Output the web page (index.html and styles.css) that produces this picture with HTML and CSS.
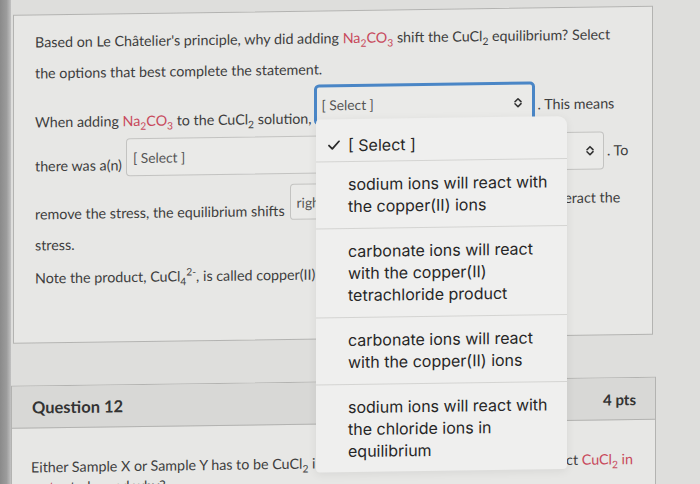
FILE: index.html
```html
<!DOCTYPE html>
<html lang="en">
<head>
<meta charset="utf-8">
<title>Question 11</title>
<link rel="stylesheet" href="styles.css">
</head>
<body>
<div class="screen">
  <div class="bezel"></div>
  <div class="viewport">
    <div class="sheet">
      <section class="card q11">
        <p class="prompt">Based on Le Châtelier's principle, why did adding <span class="chem">Na<sub>2</sub>CO<sub>3</sub></span> shift the CuCl<sub>2</sub> equilibrium? Select the options that best complete the statement.</p>

        <div class="row r1">
          <span class="lead">When adding <span class="chem">Na<sub>2</sub>CO<sub>3</sub></span> to the CuCl<sub>2</sub> solution,</span>
          <span class="select focused s1"><span class="val">[ Select ]</span><svg class="chev" viewBox="0 0 10 12"><path d="M2 5 L5 2 L8 5 M2 7 L5 10 L8 7"/></svg></span>
          <span class="tail">. This means</span>
        </div>

        <div class="row r2">
          <span class="lead">there was a(n)</span>
          <span class="select s2"><span class="val">[ Select ]</span><svg class="chev" viewBox="0 0 10 12"><path d="M2 5 L5 2 L8 5 M2 7 L5 10 L8 7"/></svg></span>
          <span class="tail">. To</span>
        </div>

        <div class="row r3">
          <span class="lead">remove the stress, the equilibrium shifts</span>
          <span class="select s3"><span class="val">right</span><svg class="chev" viewBox="0 0 10 12"><path d="M2 5 L5 2 L8 5 M2 7 L5 10 L8 7"/></svg></span>
          <span class="tail">to counteract the</span>
        </div>

        <p class="line stress">stress.</p>
        <p class="line note">Note the product, CuCl<sub>4</sub><sup>2-</sup>, is called copper(II) tetrachloride.</p>
      </section>

      <section class="card q12">
        <header class="qhead">
          <h2 class="qtitle">Question 12</h2>
          <span class="pts">4 pts</span>
        </header>
        <div class="qbody">
          <p class="qline"><span class="qa">Either Sample X or Sample Y has to be CuCl<sub>2</sub> in water. Which sample do you</span><span class="qb">expect <span class="chem">CuCl<sub>2</sub> in</span></span></p>
          <p class="qline2"><span class="chem">water</span> to be and why?</p>
        </div>
      </section>

      <div class="menu">
        <div class="opt first"><svg class="check" viewBox="0 0 12 10"><path d="M1 5.2 L4.3 8.6 L11 1"/></svg>[ Select ]</div>
        <div class="opt">sodium ions will react with<br>the copper(II) ions</div>
        <div class="opt">carbonate ions will react<br>with the copper(II)<br>tetrachloride product</div>
        <div class="opt">carbonate ions will react<br>with the copper(II) ions</div>
        <div class="opt last">sodium ions will react with<br>the chloride ions in<br>equilibrium</div>
      </div>
    </div>
  </div>
</div>
</body>
</html>
```

FILE: styles.css
```css
* { box-sizing: border-box; }

html, body {
  margin: 0;
  height: 100%;
}

body {
  background: #e0e0de;
  overflow: hidden;
  font-family: Lato, "Liberation Sans", sans-serif;
  color: #3e3e3e;
}

.screen {
  display: flex;
  width: 700px;
  height: 484px;
}

.bezel {
  flex: none;
  width: 11px;
  background: linear-gradient(90deg, #8a8a8a 0%, #9c9c9c 60%, #c2c2c2 100%);
}

.viewport {
  flex: 1;
  position: relative;
  overflow: hidden;
  background: #dededc;
}

.sheet {
  position: relative;
  height: 510px;
  padding-top: 10px;
  transform: skewY(-0.8deg);
  transform-origin: 344px 242px;
}

sub, sup {
  font-size: 0.72em;
  line-height: 0;
}

.chem { color: #c84a5c; }

/* ---------- question 11 card ---------- */
.card {
  background: #e7e7e5;
  border: 1px solid #b3b3b1;
}

.q11 {
  margin-left: 2px;
  width: 640px;
  height: 329px;
  padding: 11px 23px 0 21px;
  font-size: 14.3px;
}

.prompt {
  margin: 0;
  line-height: 31px;
}

.row {
  display: flex;
  align-items: flex-start;
  white-space: nowrap;
}

.lead, .tail {
  line-height: 20px;
}

.lead { margin-right: 2px; }
.tail { margin-left: 3px; }

.select {
  flex: none;
  display: flex;
  align-items: center;
  justify-content: space-between;
  background: #eaeae8;
  border: 1px solid #c3c3c1;
  border-radius: 4px;
  padding: 0 8px 0 6px;
  color: #555;
  font-size: 13.8px;
}

.select.focused {
  border: 3px solid #4a86c6;
  border-radius: 5px;
  padding: 0 9px 0 5px;
}

.chev {
  width: 10px;
  height: 12px;
  fill: none;
  stroke: #333;
  stroke-width: 1.6;
  stroke-linecap: round;
  stroke-linejoin: round;
}

.r1 .s1 { width: 221px; height: 41px; }
.r1 .lead { margin-top: 24px; }
.r1 .tail { margin-top: 13px; }

.r2 { margin-top: 7px; }
.r2 .s2 { width: 478px; height: 38px; }
.r2 .lead { margin-top: 17px; margin-right: 4px; }
.r2 .tail { margin-top: 9px; }

.r3 { margin-top: 10px; }
.r3 .s3 { width: 216px; height: 36px; }
.r3 .lead { margin-top: 17px; margin-right: 5px; }
.r3 .tail { margin-top: 8px; margin-left: 6px; }

.line {
  margin: 0;
  line-height: 20px;
}

.stress { margin-top: 11px; }
.note { margin-top: 13px; }

/* ---------- question 12 card ---------- */
.q12 {
  margin-top: 42px;
  width: 645px;
  height: 140px;
}

.qhead {
  display: flex;
  align-items: center;
  justify-content: space-between;
  height: 42px;
  padding: 0 19px 0 20px;
  background: #d8d8d6;
  border-bottom: 1px solid #b3b3b1;
}

.qtitle {
  margin: 0;
  font-size: 16.5px;
  font-weight: 700;
  color: #333;
}

.pts {
  font-size: 15px;
  font-weight: 700;
  color: #333;
}

.qbody {
  padding: 29px 22px 0 19px;
  font-size: 14.3px;
  line-height: 20px;
}

.qline {
  margin: 0;
  display: flex;
  justify-content: space-between;
  white-space: nowrap;
}

.qa {
  flex: 1 1 auto;
  min-width: 0;
  overflow: hidden;
  margin-right: 4px;
}

.qb { flex: none; }

.qline2 { margin: 0; }

/* ---------- native popup menu ---------- */
.menu {
  position: absolute;
  left: 305px;
  top: 119px;
  width: 251px;
  background: #efefee;
  border-radius: 4px 9px 4px 4px;
  box-shadow: 0 2px 10px rgba(0, 0, 0, 0.07);
  font-family: Inter, "Noto Sans", sans-serif;
  font-size: 16px;
  line-height: 22px;
  color: #262626;
}

.opt {
  display: flex;
  align-items: center;
  padding: 11px 12px 11px 32px;
  border-top: 1px solid #d4d4d2;
}

.opt.first {
  border-top: none;
  padding: 15px 12px 5px 32px;
}

.opt.last { padding-bottom: 10px; }

.check {
  width: 12px;
  height: 10px;
  margin-left: -20px;
  margin-right: 8px;
  fill: none;
  stroke: #2a2a2a;
  stroke-width: 1.8;
  stroke-linecap: round;
  stroke-linejoin: round;
}
```
